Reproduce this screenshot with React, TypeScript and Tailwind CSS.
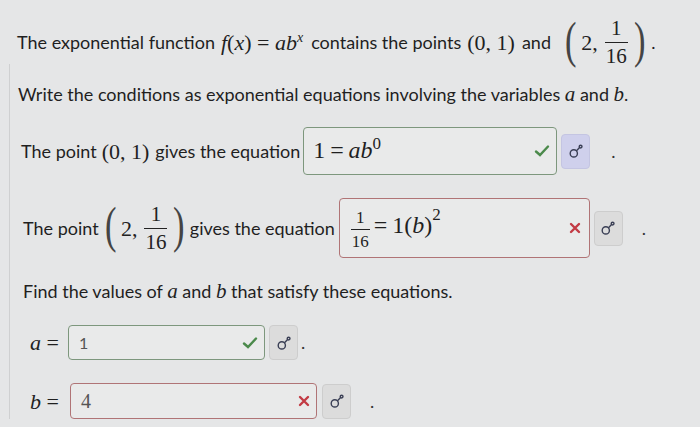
import React from "react";

const serif = "font-['Liberation_Serif',serif]";

const KeyIcon = () => (
  <svg width="16" height="16" viewBox="0 0 16 16" fill="none" stroke="#3a3f55" strokeWidth="1.4">
    <circle cx="5.8" cy="10.4" r="3.6" />
    <path d="M8.5 7.7 L11.6 4.6" />
    <circle cx="12.6" cy="3.6" r="1.4" />
  </svg>
);

const Check = () => (
  <svg width="16" height="14" viewBox="0 0 16 14" fill="none" stroke="#4b8a4b" strokeWidth="2.4" strokeLinecap="round">
    <path d="M2 7.5 L6 11 L14 2.5" />
  </svg>
);

const Cross = () => (
  <svg width="12" height="12" viewBox="0 0 12 12" fill="none" stroke="#c23b44" strokeWidth="2.4" strokeLinecap="round">
    <path d="M2 2 L10 10 M10 2 L2 10" />
  </svg>
);

const Frac = ({ n, d, cls = "" }: { n: string; d: string; cls?: string }) => (
  <span className={`inline-flex flex-col items-center leading-none mx-[3px] ${cls}`}>
    <span className="px-[2px] pb-[3px]">{n}</span>
    <span className="w-full border-t border-[#222]" />
    <span className="px-[1px] pt-[3px]">{d}</span>
  </span>
);

const BigPoint = () => (
  <span className={`inline-flex items-center ${serif} text-[22px] text-[#222]`}>
    <span className="text-[46px] font-extralight text-[#444] leading-none scale-x-75 scale-y-110 -mt-[4px]">(</span>
    <span className="ml-[3px]">2,</span>
    <Frac n="1" d="16" cls="ml-[7px] text-[21px]" />
    <span className="text-[46px] font-extralight text-[#444] leading-none scale-x-75 scale-y-110 -mt-[4px] ml-[1px]">)</span>
  </span>
);

const Btn = ({ purple = false }: { purple?: boolean }) => (
  <div
    className={`flex items-center justify-center rounded-[4px] border ${
      purple ? "bg-[#cfd0ec] border-[#c4c5e2]" : "bg-[#dcdcdc] border-[#cdcdcd]"
    } w-[29px] h-[35px]`}
  >
    <KeyIcon />
  </div>
);

export default function App() {
  return (
    <div className="w-[700px] h-[427px] bg-[#e5e6e7] overflow-hidden font-['Lato',sans-serif] text-[18px] text-[#1f1f1f]">
      {/* intro line */}
      <div className="flex items-center h-[44px] mt-[20px] pl-[17px]">
        <span>The exponential function</span>
        <span className={`${serif} text-[22px] ml-[6px]`}>
          <i>f</i>(<i>x</i>) = <i>ab</i>
          <sup className="text-[14px] italic -top-[8px] relative">x</sup>
        </span>
        <span className="ml-[8px]">contains the points</span>
        <span className={`${serif} text-[22px] ml-[6px]`}>(0, 1)</span>
        <span className="ml-[7px]">and</span>
        <span className="ml-[12px]">
          <BigPoint />
        </span>
        <span className="ml-[4px]">.</span>
      </div>

      <div className="flex ml-[9px] border-l border-[#cfd0d1] pl-[8px] flex-col">
        <div className="flex items-center h-[26px] mt-[18px]">
          <span>
            Write the conditions as exponential equations involving the variables{" "}
            <i className={`${serif} text-[21px]`}>a</i> and <i className={`${serif} text-[21px]`}>b</i>.
          </span>
        </div>

        {/* first equation */}
        <div className="flex items-center h-[48px] mt-[19px] pl-[3px]">
          <span>The point</span>
          <span className={`${serif} text-[22px] ml-[5px]`}>(0, 1)</span>
          <span className="ml-[6px]">gives the equation</span>
          <div className="ml-[3px] w-[254px] h-[48px] rounded-[4px] border-[1.5px] border-[#7d977d] bg-[#e9eaea] flex items-center pl-[9px] pr-[6px]">
            <span className={`${serif} text-[24px] flex-1 -mt-[2px]`}>
              1{"\u2009"}={"\u2009"}<i>ab</i>
              <sup className="text-[17px] relative -top-[9px]">0</sup>
            </span>
            <Check />
          </div>
          <div className="ml-[4px]">
            <Btn purple />
          </div>
          <span className="ml-[21px] text-[#333]">.</span>
        </div>

        {/* second equation */}
        <div className="flex items-center h-[60px] mt-[23px] pl-[5px]">
          <span>The point</span>
          <span className="ml-[4px]">
            <BigPoint />
          </span>
          <span className="ml-[3px]">gives the equation</span>
          <div className="ml-[4px] w-[251px] h-[60px] rounded-[4px] border-[1.5px] border-[#b07476] bg-[#e9eaea] flex items-center pl-[8px] pr-[8px]">
            <span className={`${serif} text-[24px] flex-1 flex items-center -mt-[6px]`}>
              <Frac n="1" d="16" cls="text-[17px] mr-[4px] mt-[8px]" />
              ={"\u2009"}1(<i>b</i>)
              <sup className="text-[17px] relative -top-[10px]">2</sup>
            </span>
            <Cross />
          </div>
          <div className="ml-[4px]">
            <Btn />
          </div>
          <span className="ml-[19px] text-[#333]">.</span>
        </div>

        <div className="flex items-center h-[24px] mt-[22px] pl-[5px]">
          <span>
            Find the values of <i className={`${serif} text-[21px]`}>a</i> and{" "}
            <i className={`${serif} text-[21px]`}>b</i> that satisfy these equations.
          </span>
        </div>

        {/* a = */}
        <div className="flex items-center h-[35px] mt-[21px] pl-[12px]">
          <span className={`${serif} text-[22px] w-[38px]`}>
            <i>a</i> =
          </span>
          <div className="w-[197px] h-[35px] rounded-[4px] border-[1.5px] border-[#7d977d] bg-[#e9eaea] flex items-center pl-[10px] pr-[6px]">
            <span className="flex-1 text-[#555] text-[16px]">1</span>
            <Check />
          </div>
          <div className="ml-[4px]">
            <Btn />
          </div>
          <span className="ml-[3px] text-[#333]">.</span>
        </div>

        {/* b = */}
        <div className="flex items-center h-[36px] mt-[23px] pl-[12px]">
          <span className={`${serif} text-[22px] w-[40px]`}>
            <i>b</i> =
          </span>
          <div className="w-[247px] h-[36px] rounded-[4px] border-[1.5px] border-[#b07476] bg-[#e9eaea] flex items-center pl-[10px] pr-[6px]">
            <span className={`flex-1 text-[#555] text-[20px] ${serif}`}>4</span>
            <Cross />
          </div>
          <div className="ml-[5px]">
            <Btn />
          </div>
          <span className="ml-[19px] text-[#333]">.</span>
        </div>
      </div>
    </div>
  );
}
